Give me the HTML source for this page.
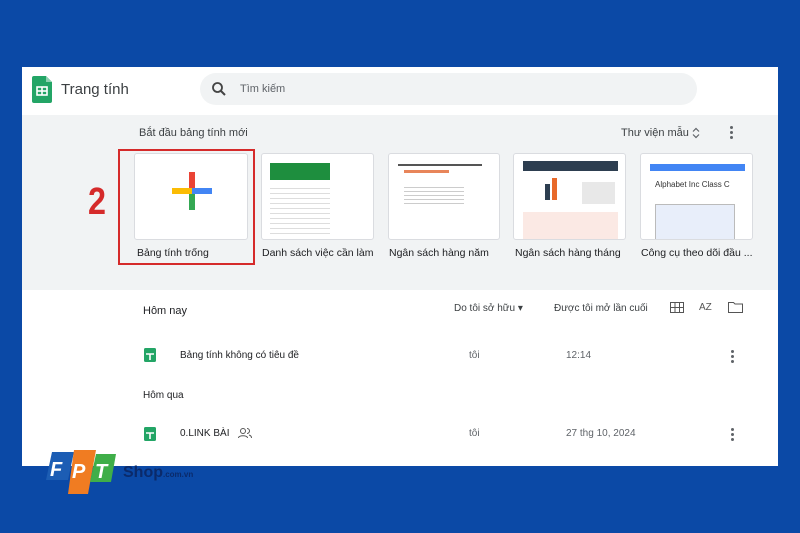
<!DOCTYPE html>
<html><head><meta charset="utf-8"><style>
*{margin:0;padding:0;box-sizing:border-box}
body{width:800px;height:533px;background:#0b49a6;position:relative;overflow:hidden;font-family:"Liberation Sans","Noto Sans CJK SC",sans-serif;color:#3c4043}
.abs{position:absolute}
#panel{left:22px;top:67px;width:756px;height:399px;background:#fff}
#gray{left:22px;top:115px;width:756px;height:175px;background:#f1f3f4}
.card{position:absolute;top:153px;height:87px;background:#fff;border:1px solid #dadce0;border-radius:3px;overflow:hidden}
.lbl{position:absolute;top:247px;font-size:10.5px;color:#202124;white-space:nowrap}
.t{position:absolute;white-space:nowrap}
.dots{position:absolute;width:3px}
.dots i{display:block;width:3px;height:3px;border-radius:50%;background:#5f6368;margin-bottom:2px}
</style></head><body>
<div id="panel" class="abs"></div>
<div id="gray" class="abs"></div>
<svg class="abs" style="left:32px;top:76px" width="20" height="27" viewBox="0 0 20 27"><path d="M2 0h12l6 6v19a2 2 0 0 1-2 2H2a2 2 0 0 1-2-2V2a2 2 0 0 1 2-2z" fill="#23a566"/><path d="M14 0v6h6z" fill="#8ed1b1"/><rect x="5" y="11" width="10" height="8" fill="none" stroke="#fff" stroke-width="1.6"/><line x1="5" y1="15" x2="15" y2="15" stroke="#fff" stroke-width="1.6"/><line x1="10" y1="11" x2="10" y2="19" stroke="#fff" stroke-width="1.6"/></svg>
<div class="t" style="left:61px;top:81px;font-size:15px;color:#3c4043">Trang tính</div>
<div class="abs" style="left:200px;top:73px;width:497px;height:32px;background:#f1f3f4;border-radius:16px"></div>
<svg class="abs" style="left:211px;top:81px" width="16" height="16" viewBox="0 0 16 16"><circle cx="6.5" cy="6.5" r="4.5" fill="none" stroke="#444" stroke-width="1.8"/><line x1="10" y1="10" x2="14" y2="14" stroke="#444" stroke-width="2"/></svg>
<div class="t" style="left:240px;top:83px;font-size:11px;color:#5f6368">Tìm kiếm</div>
<div class="t" style="left:139px;top:127px;font-size:11px;color:#3c4043">Bắt đầu bảng tính mới</div>
<div class="t" style="left:621px;top:127px;font-size:11px;color:#3c4043">Thư viện mẫu</div>
<svg class="abs" style="left:692px;top:127px" width="8" height="12"><path d="M1 4.5l3-3 3 3M1 7.5l3 3 3-3" fill="none" stroke="#5f6368" stroke-width="1.2"/></svg>
<div class="dots" style="left:730px;top:126px"><i></i><i></i><i></i></div>
<div class="card" style="left:134px;width:114px">
 <div class="abs" style="left:54px;top:18px;width:6px;height:19px;background:#ea4335"></div>
 <div class="abs" style="left:54px;top:37px;width:6px;height:19px;background:#34a853"></div>
 <div class="abs" style="left:37px;top:34px;width:20px;height:6px;background:#fbbc04"></div>
 <div class="abs" style="left:57px;top:34px;width:20px;height:6px;background:#4285f4"></div>
</div>
<div class="card" style="left:261px;width:113px">
 <div class="abs" style="left:8px;top:9px;width:60px;height:17px;background:#1e8e3e"></div>
 <div class="abs" style="left:8px;top:30px;width:60px;height:50px;background:repeating-linear-gradient(#fff 0 4px,#ddd 4px 5px)"></div>
</div>
<div class="card" style="left:388px;width:112px">
 <div class="abs" style="left:9px;top:10px;width:84px;height:2px;background:#555"></div>
 <div class="abs" style="left:15px;top:16px;width:45px;height:3px;background:#e8855a"></div>
 <div class="abs" style="left:15px;top:30px;width:60px;height:20px;background:repeating-linear-gradient(#fff 0 3px,#ccc 3px 4px)"></div>
</div>
<div class="card" style="left:513px;width:113px">
 <div class="abs" style="left:9px;top:7px;width:95px;height:10px;background:#2d3e50"></div>
 <div class="abs" style="left:31px;top:30px;width:5px;height:16px;background:#2d3e50"></div>
 <div class="abs" style="left:38px;top:24px;width:5px;height:22px;background:#e8692a"></div>
 <div class="abs" style="left:68px;top:28px;width:33px;height:22px;background:#e8e8e8"></div>
 <div class="abs" style="left:9px;top:58px;width:95px;height:28px;background:#fbe9e4"></div>
</div>
<div class="card" style="left:640px;width:113px">
 <div class="abs" style="left:9px;top:10px;width:95px;height:7px;background:#4285f4"></div>
 <div class="t" style="left:14px;top:26px;font-size:8px;color:#333">Alphabet Inc Class C</div>
 <div class="abs" style="left:14px;top:50px;width:80px;height:36px;background:#e8eefa;border:1px solid #bbb"></div>
</div>
<div class="abs" style="left:118px;top:149px;width:137px;height:116px;border:2px solid #d52a2a"></div>
<div class="t" style="left:88px;top:181px;font-size:38px;font-weight:bold;color:#d52a2a;transform:scaleX(0.85);transform-origin:left">2</div>
<div class="lbl" style="left:137px">Bảng tính trống</div>
<div class="lbl" style="left:262px">Danh sách việc cần làm</div>
<div class="lbl" style="left:389px">Ngân sách hàng năm</div>
<div class="lbl" style="left:515px">Ngân sách hàng tháng</div>
<div class="lbl" style="left:641px">Công cụ theo dõi đầu ...</div>
<div class="t" style="left:143px;top:305px;font-size:11px;color:#202124">Hôm nay</div>
<div class="t" style="left:454px;top:303px;font-size:10px;color:#3c4043">Do tôi sở hữu ▾</div>
<div class="t" style="left:554px;top:303px;font-size:10px;color:#3c4043">Được tôi mở lần cuối</div>
<svg class="abs" style="left:670px;top:302px" width="14" height="11"><rect x="0.5" y="0.5" width="13" height="10" fill="none" stroke="#555"/><path d="M0 5.5h14M5 0v11M9.5 0v11" stroke="#555"/></svg>
<div class="t" style="left:699px;top:302px;font-size:10px;color:#555">AZ</div>
<svg class="abs" style="left:728px;top:301px" width="15" height="12"><path d="M0.5 1.5h5l1.5 1.5h7.5v8.5H0.5z" fill="none" stroke="#555"/></svg>
<svg class="abs" style="left:144px;top:348px" width="12" height="14"><rect width="12" height="14" rx="1.5" fill="#23a566"/><path d="M2 6h8M6 6v6" stroke="#fff" stroke-width="1.6"/></svg>
<div class="t" style="left:180px;top:350px;font-size:10px;color:#202124">Bảng tính không có tiêu đề</div>
<div class="t" style="left:469px;top:350px;font-size:10px;color:#5f6368">tôi</div>
<div class="t" style="left:566px;top:350px;font-size:10px;color:#5f6368">12:14</div>
<div class="dots" style="left:731px;top:350px"><i></i><i></i><i></i></div>
<div class="t" style="left:143px;top:390px;font-size:10px;color:#202124">Hôm qua</div>
<svg class="abs" style="left:144px;top:427px" width="12" height="14"><rect width="12" height="14" rx="1.5" fill="#23a566"/><path d="M2 6h8M6 6v6" stroke="#fff" stroke-width="1.6"/></svg>
<div class="t" style="left:180px;top:428px;font-size:10px;color:#202124">0.LINK BÀI</div>
<svg class="abs" style="left:238px;top:427px" width="14" height="12"><circle cx="5" cy="4" r="2.5" fill="none" stroke="#555"/><path d="M0.5 11c0-3 9-3 9 0M9 1.5a2.5 2.5 0 0 1 0 5M11 8c2 .5 2.5 1.5 2.5 3" fill="none" stroke="#555"/></svg>
<div class="t" style="left:469px;top:428px;font-size:10px;color:#5f6368">tôi</div>
<div class="t" style="left:566px;top:428px;font-size:10px;color:#5f6368">27 thg 10, 2024</div>
<div class="dots" style="left:731px;top:428px"><i></i><i></i><i></i></div>
<svg class="abs" style="left:44px;top:448px" width="72" height="48"><path d="M8 4h22l-6 28H2z" fill="#1c5db4"/><path d="M30 2h22l-8 44H24z" fill="#f07c22"/><path d="M52 6h20l-5 28H46z" fill="#3fae49"/>
<text x="6" y="28" font-family="Liberation Sans" font-style="italic" font-weight="bold" font-size="20" fill="#fff">F</text><text x="28" y="30" font-family="Liberation Sans" font-style="italic" font-weight="bold" font-size="20" fill="#fff">P</text><text x="51" y="30" font-family="Liberation Sans" font-style="italic" font-weight="bold" font-size="20" fill="#fff">T</text></svg>
<div class="t" style="left:123px;top:464px;font-size:16px;font-weight:bold;color:#0b2a6a">Shop<span style="font-size:8px">.com.vn</span></div>
</body></html>
